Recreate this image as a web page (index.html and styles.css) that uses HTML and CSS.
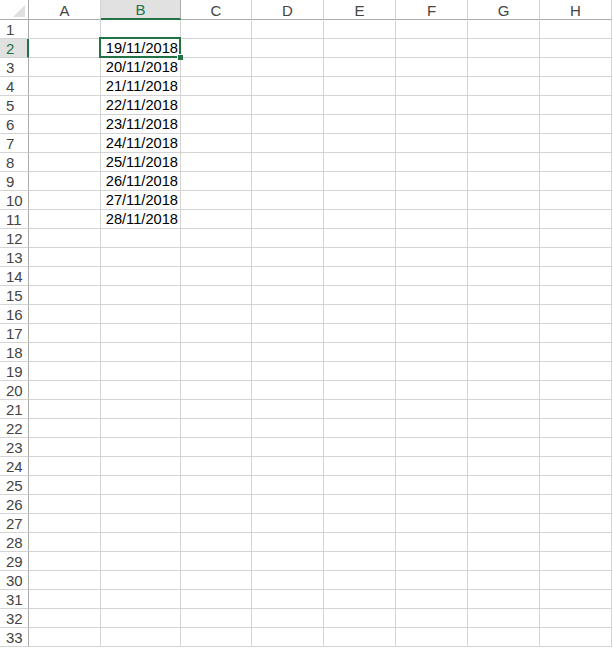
FILE: index.html
```html
<!DOCTYPE html>
<html>
<head>
<meta charset="utf-8">
<link rel="stylesheet" href="styles.css">
</head>
<body>
<div class="sheet" id="sheet">
  <div class="corner"><svg class="tri" width="12" height="12" viewBox="0 0 12 12"><polygon points="12,0 12,12 0,12" fill="#dfdfdf"/></svg></div>
  <div class="ch">A</div>
  <div class="ch active">B</div>
  <div class="ch">C</div>
  <div class="ch">D</div>
  <div class="ch">E</div>
  <div class="ch">F</div>
  <div class="ch">G</div>
  <div class="ch">H</div>
</div>
<script src="app.js"></script>
</body>
</html>
```

FILE: app.js
```js
var sheet = document.getElementById('sheet');
var dates = {2:'19/11/2018',3:'20/11/2018',4:'21/11/2018',5:'22/11/2018',6:'23/11/2018',7:'24/11/2018',8:'25/11/2018',9:'26/11/2018',10:'27/11/2018',11:'28/11/2018'};
var html = '';
for (var r = 1; r <= 33; r++) {
  html += '<div class="rh' + (r === 2 ? ' active' : '') + '">' + r + '</div>';
  for (var c = 0; c < 8; c++) {
    var txt = (c === 1 && dates[r]) ? dates[r] : '';
    var cls = 'cell';
    if (c === 1 && r === 2) cls += ' sel';
    html += '<div class="' + cls + '">' + txt + '</div>';
  }
}
sheet.insertAdjacentHTML('beforeend', html);
```

FILE: styles.css
```css
html, body {
  margin: 0;
  padding: 0;
  background: #fff;
  overflow: hidden;
}
.sheet {
  display: grid;
  grid-template-columns: 29px 72px 80px 71px 72px 72px 72px 72px 72px;
  grid-auto-rows: 19px;
  grid-template-rows: 20px;
  font-family: "Liberation Sans", Arial, sans-serif;
  width: 613px;
}
.corner {
  border-right: 1px solid #ababab;
  border-bottom: 1px solid #ababab;
  position: relative;
}
.tri {
  position: absolute;
  right: 3px;
  bottom: 2px;
}
.ch {
  border-right: 1px solid #d4d4d4;
  border-bottom: 1px solid #ababab;
  font-size: 15px;
  color: #444;
  display: flex;
  align-items: center;
  justify-content: center;
  padding-top: 1px;
  box-sizing: border-box;
}
.ch.active {
  background: #e1e1e1;
  color: #217346;
  border-bottom: 2px solid #217346;
  border-right-color: #ababab;
}
.rh {
  border-right: 1px solid #ababab;
  border-bottom: 1px solid #d4d4d4;
  font-size: 15px;
  color: #444;
  display: flex;
  align-items: center;
  padding-left: 6px;
  padding-top: 1px;
  box-sizing: border-box;
}
.rh.active {
  background: #e1e1e1;
  color: #217346;
  border-right: 2px solid #217346;
}
.cell {
  border-right: 1px solid #d4d4d4;
  border-bottom: 1px solid #d4d4d4;
  font-size: 14.67px;
  color: #000;
  display: flex;
  align-items: flex-end;
  justify-content: flex-end;
  padding-right: 2px;
  box-sizing: border-box;
  line-height: 17px;
  position: relative;
  white-space: nowrap;
}
.cell.sel::after {
  content: "";
  position: absolute;
  left: -2px;
  top: -2px;
  right: -1px;
  bottom: -1px;
  border: 2px solid #217346;
}
.cell.sel::before {
  content: "";
  position: absolute;
  right: -3px;
  bottom: -3px;
  width: 5px;
  height: 5px;
  background: #217346;
  border-left: 1px solid #fff;
  border-top: 1px solid #fff;
  z-index: 2;
}
```
